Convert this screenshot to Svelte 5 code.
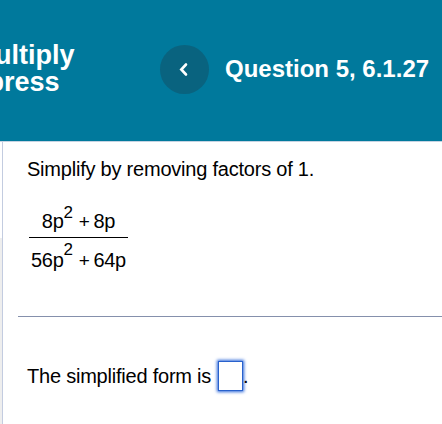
<script>
	let title = ["ultiply", "press"];
	let question = "Question 5, 6.1.27";
	let answer = "";
</script>

<style>
	:global(body) {
		overflow: hidden;
	}

	.page {
		width: 442px;
		height: 424px;
		overflow: hidden;
		display: flex;
		flex-direction: column;
		background: #fff;
		color: #000;
		font-family: Arial, "Liberation Sans", sans-serif;
		font-size: 20px;
	}

	.header {
		box-sizing: border-box;
		height: 142px;
		flex: none;
		display: flex;
		background: #00799c;
		border-bottom: 1px solid #c5d3e2;
		color: #fff;
		font-weight: bold;
	}

	.title {
		width: 160px;
		flex: none;
		padding-top: 42px;
		font-size: 27px;
		line-height: 27px;
	}

	.title div {
		width: 74.5px;
		display: flex;
		justify-content: flex-end;
		white-space: nowrap;
	}

	.title div:last-child {
		width: 59.5px;
	}

	.prev {
		width: 49px;
		height: 49px;
		flex: none;
		margin-top: 45px;
		padding: 0;
		border: 0;
		border-radius: 50%;
		background: #09637f;
	}

	.prev svg {
		display: block;
	}

	.question {
		margin: 54px 0 0 16px;
		font-size: 24px;
		line-height: 30px;
		white-space: nowrap;
	}

	.body {
		flex: 1;
		display: flex;
	}

	.gutter {
		width: 2px;
		margin-top: 96px;
		background: #eee;
	}

	.content {
		flex: 1;
		border-left: 1px solid #c3cce0;
	}

	.prompt {
		margin: 15px 0 0 24px;
		line-height: 24px;
		letter-spacing: -0.22px;
		white-space: nowrap;
	}

	.fraction {
		width: 99px;
		margin: 24px 0 0 26px;
		text-align: center;
		white-space: nowrap;
	}

	.term {
		height: 32px;
		line-height: 32px;
		letter-spacing: -0.3px;
	}

	.term:last-child {
		height: 38px;
		line-height: 44px;
		border-top: 1px solid #000;
	}

	sup {
		position: relative;
		top: -10px;
		font-size: 17px;
		line-height: 0;
		vertical-align: baseline;
	}

	.term:last-child sup {
		top: -12px;
	}

	.plus {
		margin: 0 4px 0 6px;
		font-size: 19px;
	}

	hr {
		height: 1px;
		margin: 40px 0 0 15px;
		border: 0;
		background: #8590ac;
	}

	.answer {
		display: flex;
		margin: 42px 0 0 24px;
		line-height: 34px;
		letter-spacing: -0.22px;
		white-space: nowrap;
	}

	.box {
		box-sizing: border-box;
		width: 25px;
		height: 30px;
		margin: 2px 0 0 7px;
		padding: 0;
		border: 1px solid #2861cc;
		border-radius: 0;
		outline: none;
		background: #fff;
		box-shadow: 0 0 3px 1px #2b66d8;
	}
</style>

<div class="page">
	<div class="header">
		<div class="title">
			{#each title as line}
				<div>{line}</div>
			{/each}
		</div>
		<button type="button" class="prev" aria-label="Previous question">
			<svg width="49" height="49" viewBox="0 0 49 49" fill="none" stroke="#fff" stroke-width="2.6">
				<path d="M26 19.5 L21.3 24.5 L26 29.5" stroke-linecap="round" />
			</svg>
		</button>
		<div class="question">{question}</div>
	</div>
	<div class="body">
		<div class="gutter"></div>
		<div class="content">
			<div class="prompt">Simplify by removing factors of 1.</div>
			<div class="fraction">
				<div class="term">8p<sup>2</sup><span class="plus">+</span>8p</div>
				<div class="term">56p<sup>2</sup><span class="plus">+</span>64p</div>
			</div>
			<hr />
			<div class="answer">
				<span>The simplified form is</span>
				<input class="box" aria-label="Answer" bind:value={answer} />
				<span>.</span>
			</div>
		</div>
	</div>
</div>
